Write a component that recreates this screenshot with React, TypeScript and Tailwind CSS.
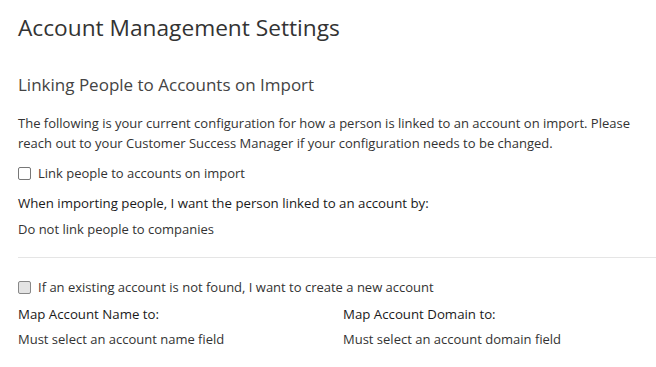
import React from "react";

export default function App() {
  return (
    <div className="w-[656px] h-[367px] overflow-hidden bg-white text-[#333]" style={{ fontFamily: "'Open Sans', Lato, sans-serif" }}>
      <div className="pl-[18px]">
        <h1 className="text-[22.7px] leading-[28px] pt-[14px] text-[#333]">Account Management Settings</h1>
        <h2 className="text-[17px] leading-[22px] mt-[32px] text-[#444]">Linking People to Accounts on Import</h2>
        <p className="text-[13px] leading-[20px] mt-[17px] pr-[18px]">
          The following is your current configuration for how a person is linked to an account on import. Please reach out to your Customer Success Manager if your configuration needs to be changed.
        </p>
        <label className="flex items-center gap-[7px] text-[13px] leading-[20px] mt-[10px]">
          <span className="w-[13px] h-[13px] border border-[#777] rounded-[2px] bg-white" />
          Link people to accounts on import
        </label>
        <div className="text-[13.25px] leading-[20px] mt-[10px] text-[#1a1a1a]">When importing people, I want the person linked to an account by:</div>
        <div className="text-[13px] leading-[20px] mt-[6px]">Do not link people to companies</div>
      </div>
      <div className="ml-[18px] mt-[18px] border-t border-[#e5e5e5]" />
      <div className="pl-[18px]">
        <label className="flex items-center gap-[7px] text-[13px] leading-[20px] mt-[19px]">
          <span className="w-[13px] h-[13px] border border-[#888] rounded-[2px] bg-[#e4e4e4]" />
          If an existing account is not found, I want to create a new account
        </label>
        <div className="grid grid-cols-[325px_1fr] text-[13px] leading-[20px] mt-[7px]">
          <div className="text-[13.25px] text-[#1a1a1a]">Map Account Name to:</div>
          <div className="text-[13.25px] text-[#1a1a1a]">Map Account Domain to:</div>
          <div className="mt-[5px]">Must select an account name field</div>
          <div className="mt-[5px]">Must select an account domain field</div>
        </div>
      </div>
    </div>
  );
}
